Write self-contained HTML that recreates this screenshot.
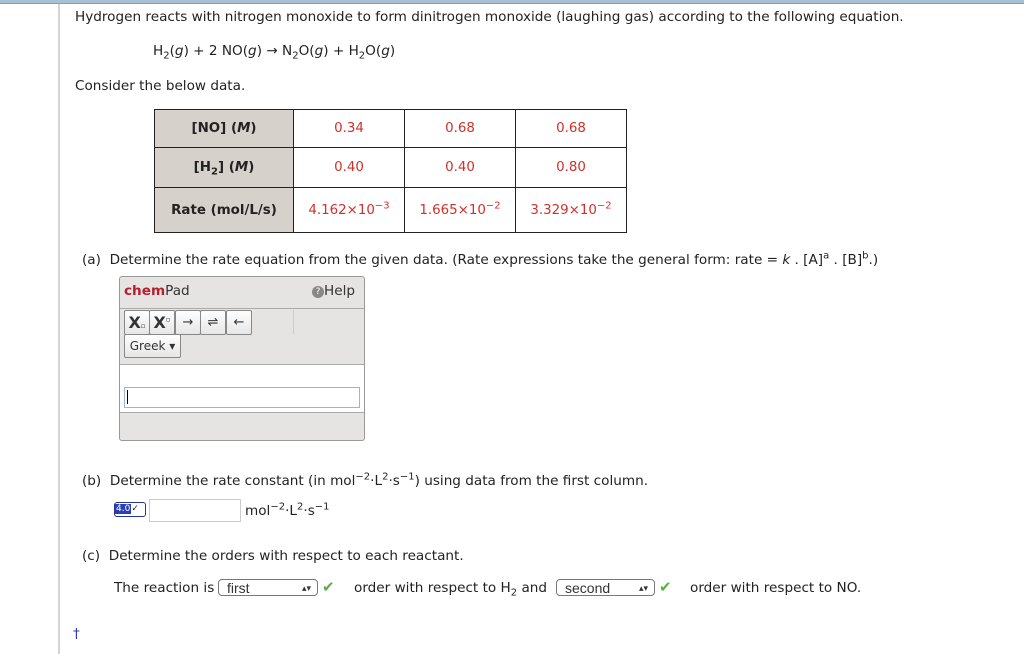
<!DOCTYPE html>
<html><head><meta charset="utf-8"><style>
body{margin:0;width:1024px;height:654px;background:#fff;position:relative;overflow:hidden;font-family:"DejaVu Sans","Liberation Sans",sans-serif;font-size:13.6px;color:#222}
.a{position:absolute;white-space:nowrap}
sub,sup{font-size:10px;line-height:0}
table{position:absolute;left:154px;top:109px;border-collapse:collapse}
td{border:1px solid #222;text-align:center;color:#d0312b;font-size:13.4px;padding:0}
td.h{background:#d6d2cb;color:#222;font-weight:bold}
.btn{position:absolute;border:1px solid #888;border-radius:2px;background:linear-gradient(#fff,#e6e6e6);text-align:center;color:#333;font-size:13px}
.sel{position:absolute;border:1px solid #777;border-radius:4px;height:17px;font-family:"Liberation Sans",sans-serif;font-size:14px;line-height:16px;padding-left:8px;box-sizing:border-box;background:#fff;color:#333}
.sel span{position:absolute;right:6px;top:0;font-size:9px}
.chk{position:absolute;color:#5aae48;font-size:15px;font-weight:bold}
</style></head><body>
<div class="a" style="left:0;top:0;width:1024px;height:3px;background:#a9bfd6;border-bottom:1px solid #8a9bb0"></div>
<div class="a" style="left:58px;top:4px;width:2px;height:650px;background:#d4d4d4"></div>
<div class="a" style="left:75px;top:9px">Hydrogen reacts with nitrogen monoxide to form dinitrogen monoxide (laughing gas) according to the following equation.</div>
<div class="a" style="left:153px;top:43px">H<sub>2</sub>(<i>g</i>) + 2 NO(<i>g</i>) → N<sub>2</sub>O(<i>g</i>) + H<sub>2</sub>O(<i>g</i>)</div>
<div class="a" style="left:75px;top:78px">Consider the below data.</div>
<table>
<tr style="height:38px"><td class="h" style="width:138px">[NO] (<i>M</i>)</td><td style="width:110px">0.34</td><td style="width:110px">0.68</td><td style="width:110px">0.68</td></tr>
<tr style="height:40px"><td class="h">[H<sub>2</sub>] (<i>M</i>)</td><td>0.40</td><td>0.40</td><td>0.80</td></tr>
<tr style="height:45px"><td class="h">Rate (mol/L/s)</td><td>4.162×10<sup>−3</sup></td><td>1.665×10<sup>−2</sup></td><td>3.329×10<sup>−2</sup></td></tr>
</table>
<div class="a" style="left:82px;top:252px">(a)&nbsp; Determine the rate equation from the given data. (Rate expressions take the general form: rate = <i>k</i> . [A]<sup>a</sup> . [B]<sup>b</sup>.)</div>
<div class="a" style="left:119px;top:276px;width:244px;height:163px;border:1px solid #999;border-radius:3px;background:#e6e3e3"></div>
<div class="a" style="left:120px;top:308px;width:244px;height:1px;background:#aaa"></div>
<div class="a" style="left:124px;top:283px;color:#b5202e;font-weight:bold">chem<span style="color:#333;font-weight:normal">Pad</span></div>
<div class="a" style="left:312px;top:283px;color:#333"><span style="display:inline-block;width:12px;height:12px;border-radius:6px;background:#888;color:#fff;font-size:9px;text-align:center;line-height:12px;vertical-align:1px">?</span>Help</div>
<div class="btn" style="left:124px;top:310px;width:24px;height:23px;font-weight:bold;font-size:16px;line-height:23px">X<span style="font-size:7px">▫</span></div>
<div class="btn" style="left:149px;top:310px;width:24px;height:23px;font-weight:bold;font-size:16px;line-height:23px">X<sup style="font-size:7px">▫</sup></div>
<div class="btn" style="left:175px;top:310px;width:24px;height:23px;line-height:23px">→</div>
<div class="btn" style="left:200px;top:310px;width:24px;height:23px;line-height:23px">⇌</div>
<div class="btn" style="left:226px;top:310px;width:24px;height:23px;line-height:23px">←</div>
<div class="a" style="left:293px;top:310px;width:1px;height:24px;background:#ccc"></div>
<div class="btn" style="left:124px;top:334px;width:55px;height:22px;line-height:22px;font-size:12px">Greek ▾</div>
<div class="a" style="left:120px;top:364px;width:244px;height:47px;background:#fff;border-top:1px solid #aaa;border-bottom:1px solid #aaa"></div>
<div class="a" style="left:124px;top:387px;width:234px;height:19px;border:1px solid #9bb5d6;background:#fff"></div>
<div class="a" style="left:127px;top:390px;width:1px;height:14px;background:#000"></div>
<div class="a" style="left:82px;top:473px">(b)&nbsp; Determine the rate constant (in mol<sup>−2</sup>·L<sup>2</sup>·s<sup>−1</sup>) using data from the first column.</div>
<div class="a" style="left:114px;top:502px;width:30px;height:13px;border:1px solid #22339a;border-radius:3px;background:#fff;font-size:9px;line-height:13px"><span style="background:#2b3fb5;color:#fff;padding:0 1px">4.0</span>✓</div>
<div class="a" style="left:149px;top:499px;width:90px;height:21px;border:1px solid #ccc"></div>
<div class="a" style="left:245px;top:503px">mol<sup>−2</sup>·L<sup>2</sup>·s<sup>−1</sup></div>
<div class="a" style="left:82px;top:548px">(c)&nbsp; Determine the orders with respect to each reactant.</div>
<div class="a" style="left:114px;top:580px">The reaction is</div>
<div class="sel" style="left:218px;top:579px;width:100px">first<span>▴▾</span></div>
<div class="chk" style="left:322px;top:578px">✔</div>
<div class="a" style="left:354px;top:580px">order with respect to H<sub>2</sub> and</div>
<div class="sel" style="left:556px;top:579px;width:99px">second<span>▴▾</span></div>
<div class="chk" style="left:659px;top:578px">✔</div>
<div class="a" style="left:690px;top:580px">order with respect to NO.</div>
<div class="a" style="left:73px;top:626px;color:#2b3fb5">†</div>
</body></html>
